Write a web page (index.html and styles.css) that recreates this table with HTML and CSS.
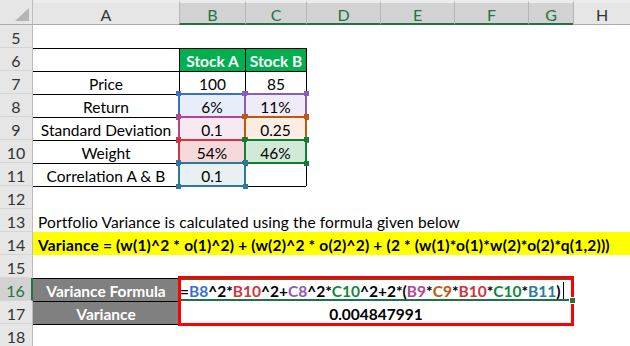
FILE: index.html
```html
<!DOCTYPE html>
<html lang="en">
<head>
  <meta charset="UTF-8" />
  <title>Portfolio Variance</title>
  <link rel="stylesheet" href="styles.css">
</head>
<body>

<div class="sheet">
  <!-- column headers -->
  <div class="corner"><span class="tri"></span></div>
  <div class="colh first">A</div>
  <div class="colh sel">B</div>
  <div class="colh sel">C</div>
  <div class="colh sel">D</div>
  <div class="colh sel">E</div>
  <div class="colh sel">F</div>
  <div class="colh sel">G</div>
  <div class="colh">H</div>

  <div class="rowh">5</div>
  <div class="c span8"></div>

  <div class="rowh">6</div>
  <div class="c tb"></div>
  <div class="c tb tl head">Stock A</div>
  <div class="c tb tl head">Stock B</div>
  <div class="c span5 tl"></div>

  <div class="rowh">7</div>
  <div class="c tb">Price</div>
  <div class="c tb tl">100</div>
  <div class="c tb tl">85</div>
  <div class="c span5 tl"></div>

  <div class="rowh">8</div>
  <div class="c tb">Return</div>
  <div class="c ref r-blue">6%</div>
  <div class="c ref r-purple">11%</div>
  <div class="c span5 tl"></div>

  <div class="rowh">9</div>
  <div class="c tb">Standard Deviation</div>
  <div class="c ref r-pink">0.1</div>
  <div class="c ref r-orange">0.25</div>
  <div class="c span5 tl"></div>

  <div class="rowh">10</div>
  <div class="c tb">Weight</div>
  <div class="c ref r-red">54%</div>
  <div class="c ref r-green">46%</div>
  <div class="c span5 tl"></div>

  <div class="rowh">11</div>
  <div class="c tb">Correlation A &amp; B</div>
  <div class="c ref r-teal">0.1</div>
  <div class="c tb tl"></div>
  <div class="c span5 tl"></div>

  <div class="rowh">12</div>
  <div class="c span3 tb"></div>
  <div class="c span5"></div>

  <div class="rowh">13</div>
  <div class="c span8 left intro">Portfolio Variance is calculated using the formula given below</div>

  <div class="rowh">14</div>
  <div class="c span8 left note">Variance = (w(1)^2 * o(1)^2) + (w(2)^2 * o(2)^2) + (2 * (w(1)*o(1)*w(2)*o(2)*q(1,2)))</div>

  <div class="rowh">15</div>
  <div class="c span8"></div>

  <div class="rowh active">16</div>
  <div class="c tb label">Variance Formula</div>
  <div class="c span6 left formula active-cell">
    <span>=</span><span class="k-blue">B8</span><span>^2*</span><span class="k-red">B10</span><span>^2+</span><span class="k-purple">C8</span><span>^2*</span><span class="k-green">C10</span><span>^2+2*(</span><span class="k-pink">B9</span><span>*</span><span class="k-orange">C9</span><span>*</span><span class="k-red">B10</span><span>*</span><span class="k-green">C10</span><span>*</span><span class="k-teal">B11</span><span>)</span><span class="caret"></span>
  </div>
  <div class="c"></div>

  <div class="rowh">17</div>
  <div class="c tb label">Variance</div>
  <div class="c span6 result">0.004847991</div>
  <div class="c"></div>

  <div class="rowh">18</div>
  <div class="c tb"></div>
  <div class="c span7"></div>

  <div class="highlight"></div>
</div>

</body>
</html>
```

FILE: styles.css
```css
* { margin: 0; padding: 0; box-sizing: border-box; }

body {
  background: #fff;
  overflow: hidden;
}

.sheet {
  position: relative;
  display: grid;
  grid-template-columns: 33px 146px 66px 61px 74px 74px 74px 45px 57px;
  grid-template-rows: 25px;
  grid-auto-rows: 23px;
  font-family: Lato, "Liberation Sans", sans-serif;
  font-size: 15.5px;
  color: #000;
}

/* headers */
.corner {
  position: relative;
  background: #e6e6e6;
  border-right: 1px solid #bcbcbc;
  border-bottom: 1px solid #ababab;
}

.corner .tri {
  position: absolute;
  right: 3px;
  bottom: 3px;
  width: 0;
  height: 0;
  border-left: 14px solid transparent;
  border-bottom: 13px solid #b5b5b5;
}

.colh {
  display: flex;
  align-items: center;
  justify-content: center;
  padding-top: 2px;
  background: #e6e6e6;
  border-top: 3px solid #ececec;
  border-left: 1px solid #b6b6b6;
  border-bottom: 1px solid #ababab;
  color: #333;
  font-size: 16px;
}

.colh.first { border-left: none; }

.colh.sel {
  background: #d2d2d2;
  color: #217346;
  border-bottom: 2px solid #217346;
}

.rowh {
  display: flex;
  align-items: center;
  justify-content: center;
  padding-top: 2px;
  background: #e6e6e6;
  border-right: 1px solid #bcbcbc;
  border-bottom: 1px solid #d5d5d5;
  color: #333;
  font-size: 16px;
}

.rowh.active {
  background: #d2d2d2;
  color: #217346;
  border-right: 2px solid #217346;
}

/* cells */
.c {
  display: flex;
  align-items: center;
  justify-content: center;
  padding-top: 2px;
  white-space: nowrap;
}

.span3 { grid-column: span 3; }
.span5 { grid-column: span 5; }
.span6 { grid-column: span 6; }
.span7 { grid-column: span 7; }
.span8 { grid-column: span 8; }

.left {
  justify-content: flex-start;
  padding-left: 5px;
}

.intro { letter-spacing: 0.1px; }

.tb { border-top: 1px solid #000; }
.tl { border-left: 1px solid #000; }

.head {
  background: #00b050;
  color: #fff;
  font-weight: bold;
}

.note {
  background: #ffff00;
  font-weight: bold;
  letter-spacing: 0.2px;
}

.label {
  background: #808080;
  color: #fff;
  font-weight: bold;
}

.result { font-weight: bold; }

/* range finder boxes */
.ref {
  position: relative;
  background: var(--f);
}

.ref::before {
  content: "";
  position: absolute;
  inset: -1px;
  border: 2px solid var(--c);
}

.ref::after {
  content: "";
  position: absolute;
  inset: -3px;
  background:
    linear-gradient(var(--c), var(--c)) left top / 5px 5px no-repeat,
    linear-gradient(var(--c), var(--c)) right top / 5px 5px no-repeat,
    linear-gradient(var(--c), var(--c)) left bottom / 5px 5px no-repeat,
    linear-gradient(var(--c), var(--c)) right bottom / 5px 5px no-repeat;
}

.r-blue   { --c: #3a6fcc; --f: #e8eef9; }
.r-purple { --c: #8a5cc0; --f: #efebf7; }
.r-pink   { --c: #b5458f; --f: #f7e9f2; }
.r-orange { --c: #c0580a; --f: #fbede4; }
.r-red    { --c: #d0343f; --f: #f5d8da; }
.r-green  { --c: #0f7f34; --f: #d3e9d8; }
.r-teal   { --c: #2b7a9c; --f: #e8f0f4; }

/* formula text */
.formula {
  position: relative;
  font-weight: bold;
  padding-left: 1px;
}

.k-blue   { color: #3a6fcc; }
.k-red    { color: #d0343f; }
.k-purple { color: #8a5cc0; }
.k-green  { color: #0f8a3a; }
.k-pink   { color: #b5458f; }
.k-orange { color: #c0580a; }
.k-teal   { color: #2b7aa0; }

.caret {
  display: inline-block;
  width: 1px;
  height: 17px;
  margin-left: 2px;
  background: #000;
}

.active-cell { box-shadow: inset 0 0 0 2px #217346; }

.active-cell::after {
  content: "";
  position: absolute;
  right: -3px;
  bottom: -3px;
  width: 5px;
  height: 5px;
  background: #217346;
  border: 1px solid #fff;
  z-index: 3;
}

/* red annotation box */
.highlight {
  position: absolute;
  left: 178px;
  top: 276px;
  width: 396px;
  height: 50px;
  border: 3px solid #ff0000;
  z-index: 2;
}
```
